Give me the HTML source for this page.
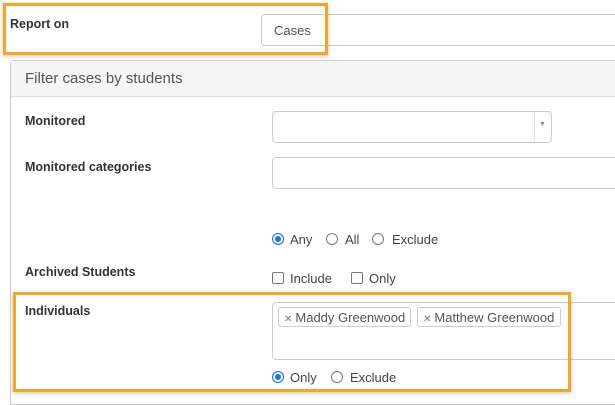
<!DOCTYPE html>
<html><head><style>
*{box-sizing:border-box;margin:0;padding:0}
body{width:615px;height:400px;background:#fff;font-family:"Liberation Sans",Arial,sans-serif;font-size:13px;color:#333;position:relative;overflow:hidden}
.a{position:absolute}
.lbl{font-weight:bold;font-size:12.5px;color:#333}
.inp{border:1px solid #ccc;border-radius:4px;background:#fff}
.orange{border:3px solid #f5a623;box-shadow:0 1px 4px rgba(0,0,0,.25)}
.radio{width:12px;height:12px;border:1px solid #777;border-radius:50%;background:#fff}
.radio.on{border-color:#1a73e8;box-shadow:inset 0 0 0 2px #fff;background:#1a73e8}
.cb{width:12px;height:12px;border:1px solid #777;border-radius:2px;background:#fff}
.t{font-size:13px;color:#444}
.tag{border:1px solid #ccc;border-radius:3px;background:#fff;font-size:13px;color:#555;padding:1px 5px;height:20px;line-height:17px;white-space:nowrap}
.x{font-size:10px;color:#777;margin-right:3px}
</style></head><body>
<div class="a inp" style="left:261px;top:14px;width:400px;height:32px"></div>
<div class="a t" style="left:274px;top:23px;color:#555">Cases</div>
<div class="a orange" style="left:3px;top:3px;width:325px;height:52px"></div>
<div class="a lbl" style="left:10px;top:17px">Report on</div>

<div class="a" style="left:10px;top:60px;width:620px;height:345px;border:1px solid #ccc;border-radius:4px 0 0 0"></div>
<div class="a" style="left:11px;top:61px;width:610px;height:36px;background:#f5f5f5;border-bottom:1px solid #ddd"></div>
<div class="a" style="left:25px;top:70px;font-size:15px;color:#555">Filter cases by students</div>

<div class="a lbl" style="left:25px;top:114px">Monitored</div>
<div class="a inp" style="left:272px;top:111px;width:280px;height:32px"></div>
<div class="a" style="left:534px;top:112px;width:1px;height:30px;background:#ddd"></div>
<div class="a" style="left:539px;top:121px;font-size:7px;color:#888">▼</div>

<div class="a lbl" style="left:25px;top:160px">Monitored categories</div>
<div class="a inp" style="left:272px;top:157px;width:400px;height:32px"></div>

<div class="a radio on" style="left:272px;top:233px"></div>
<div class="a t" style="left:290px;top:232px">Any</div>
<div class="a radio" style="left:326px;top:233px"></div>
<div class="a t" style="left:345px;top:232px">All</div>
<div class="a radio" style="left:372px;top:233px"></div>
<div class="a t" style="left:392px;top:232px">Exclude</div>

<div class="a lbl" style="left:25px;top:265px">Archived Students</div>
<div class="a cb" style="left:272px;top:272px"></div>
<div class="a t" style="left:290px;top:271px">Include</div>
<div class="a cb" style="left:351px;top:272px"></div>
<div class="a t" style="left:369px;top:271px">Only</div>

<div class="a inp" style="left:272px;top:302px;width:400px;height:58px"></div>
<div class="a tag" style="left:278px;top:307px;width:133px"><span class="x">✕</span>Maddy Greenwood</div>
<div class="a tag" style="left:417px;top:307px;width:144px"><span class="x">✕</span>Matthew Greenwood</div>
<div class="a radio on" style="left:272px;top:371px"></div>
<div class="a t" style="left:290px;top:370px">Only</div>
<div class="a radio" style="left:331px;top:371px"></div>
<div class="a t" style="left:350px;top:370px">Exclude</div>
<div class="a orange" style="left:13px;top:292px;width:558px;height:100px"></div>
<div class="a lbl" style="left:25px;top:304px">Individuals</div>
</body></html>
